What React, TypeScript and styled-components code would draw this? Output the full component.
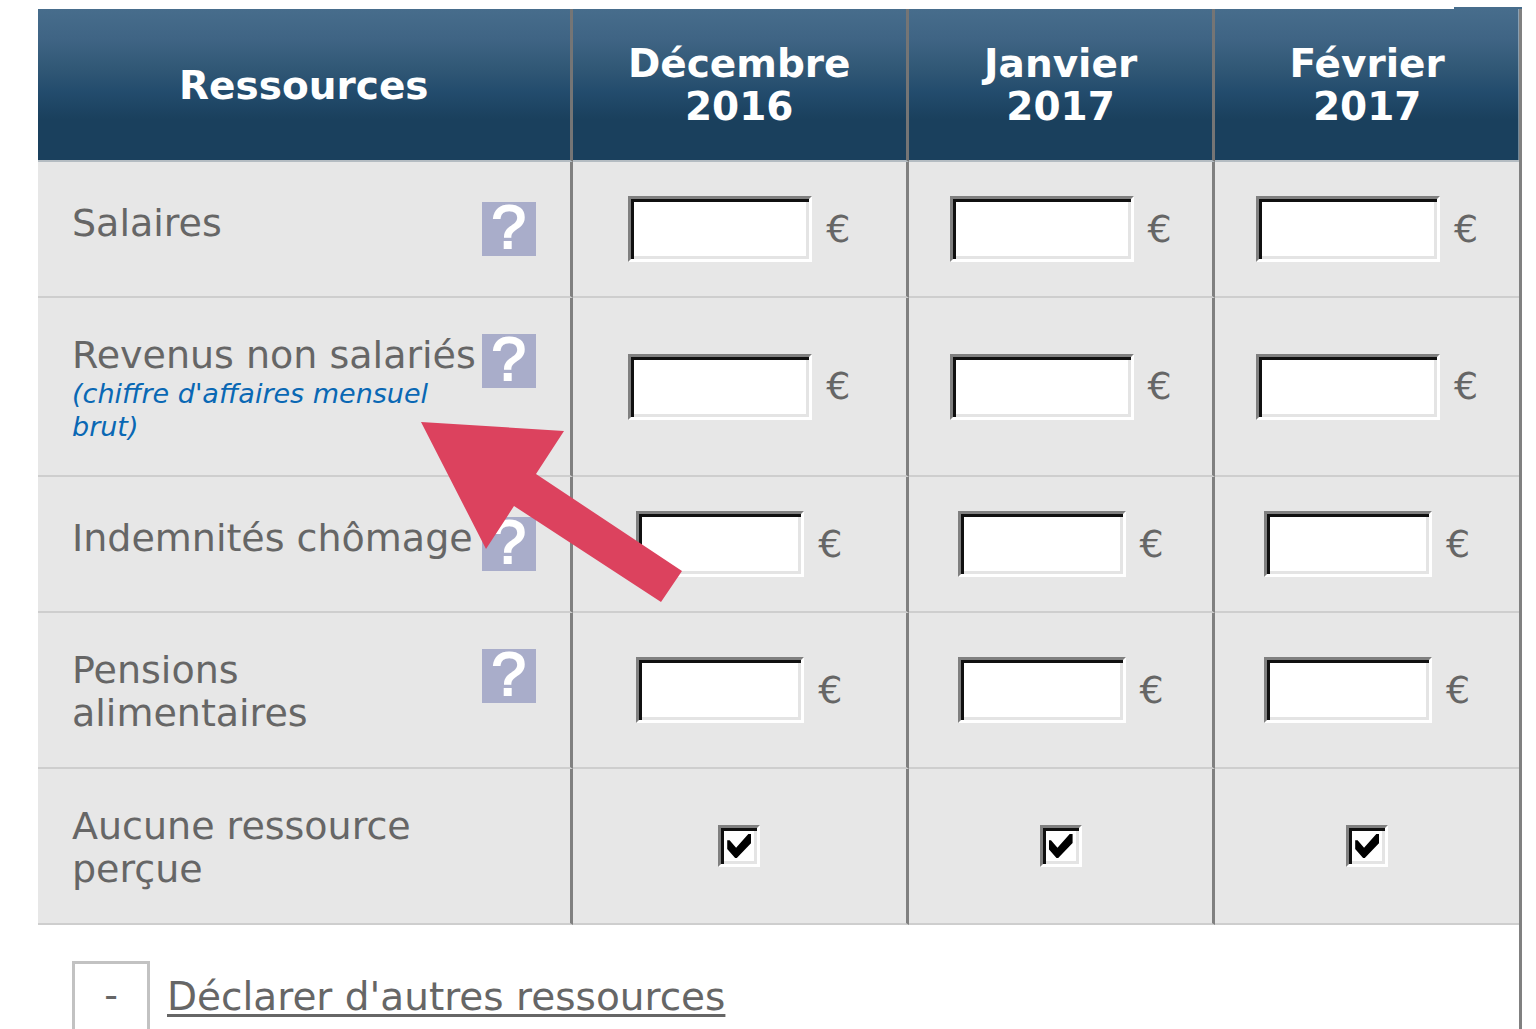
import React, { useState } from "react";
import styled, { createGlobalStyle } from "styled-components";

const GlobalStyle = createGlobalStyle`
  *, *::before, *::after { box-sizing: border-box; }
  body {
    margin: 0;
    background: #ffffff;
    color: #666666;
    font-family: Verdana, "DejaVu Sans", sans-serif;
    font-size: 38px;
    line-height: 43px;
  }
`;

const Page = styled.main`
  display: flex;
  height: 100vh;
  padding: 9px 14px 0 38px;
  overflow: hidden;
`;

const Panel = styled.section`
  position: relative;
  flex: 1;
  border-right: 3px solid #808080;
`;

const ResourceTable = styled.table`
  width: 100%;
  table-layout: fixed;
  border-collapse: separate;
  border-spacing: 0;
`;

const Column = styled.col<{ $share: number }>`
  width: ${(p) => p.$share}%;
`;

const HeadRow = styled.tr`
  background: linear-gradient(
    #476d8c 0%,
    #3f6484 20%,
    #305775 40%,
    #234c6d 54%,
    #1a405d 72%,
    #1a405d 100%
  );
`;

const HeadCell = styled.th`
  position: relative;
  padding: 33px 40px 32px;
  border-right: 3px solid #757575;
  border-bottom: 2px solid #b4bcc2;
  color: #ffffff;
  font-size: 39px;
  font-weight: bold;
  text-align: center;

  &:last-child {
    border-right: 0;
  }

  &:last-child::before {
    content: "";
    position: absolute;
    top: -2px;
    right: -3px;
    width: 68px;
    height: 2px;
    background: #476d8c;
  }
`;

const BodyRow = styled.tr`
  background: #e7e7e7;
`;

const LabelCell = styled.th`
  padding: 36px 34px 32px;
  border-right: 3px solid #808080;
  border-bottom: 2px solid #cecece;
  font-weight: normal;
  text-align: left;
`;

const LabelLine = styled.div`
  display: flex;
  align-items: flex-start;
  min-height: 58px;
`;

const LabelText = styled.div`
  flex: 1;
`;

const Note = styled.em`
  display: block;
  color: #0a68b4;
  font-size: 27px;
  line-height: 33px;
`;

const HelpButton = styled.button`
  flex: none;
  width: 54px;
  height: 54px;
  padding: 0 0 4px;
  border: 0;
  background: #a9adca;
  color: #ffffff;
  font-family: "Liberation Sans", Arial, sans-serif;
  font-size: 62px;
  line-height: 50px;
  text-align: center;
  -webkit-text-stroke: 2px #ffffff;
`;

const ValueCell = styled.td`
  padding: 34px 0;
  border-right: 3px solid #808080;
  border-bottom: 2px solid #cecece;

  &:last-child {
    border-right: 0;
  }
`;

const Field = styled.label`
  display: flex;
  align-items: center;
  justify-content: center;
  gap: 14px;
`;

const AmountInput = styled.input<{ $narrow?: boolean }>`
  width: ${(p) => (p.$narrow ? 168 : 184)}px;
  height: 66px;
  padding: 3px 8px;
  border: 3px solid;
  border-color: #808080 #ffffff #ffffff #808080;
  border-radius: 0;
  outline: 0;
  background: #ffffff;
  box-shadow: inset 3px 3px 0 #101010, inset -3px -3px 0 #e4e4e4;
  color: #333333;
  font: inherit;
`;

const TickBox = styled.input`
  display: grid;
  place-items: center;
  appearance: none;
  width: 42px;
  height: 42px;
  margin: 0;
  border: 3px solid;
  border-color: #808080 #ffffff #ffffff #808080;
  background: #ffffff;
  box-shadow: inset 3px 3px 0 #101010, inset -3px -3px 0 #e4e4e4;

  &:checked::before {
    content: "";
    width: 24px;
    height: 24px;
    background: #000000;
    clip-path: polygon(
      0 26%,
      10% 26%,
      37% 57%,
      88% 0,
      100% 0,
      100% 38%,
      40% 100%,
      33% 100%,
      0 63%
    );
  }
`;

const Footer = styled.div`
  display: flex;
  align-items: center;
  gap: 17px;
  padding: 36px 34px 0;
`;

const ToggleButton = styled.button`
  width: 78px;
  height: 78px;
  padding: 0 0 10px;
  border: 3px solid #c2c2c2;
  background: #ffffff;
  color: #666666;
  font: inherit;
`;

const MoreLink = styled.a`
  padding-bottom: 8px;
  color: #666666;
  font-size: 39px;
  text-decoration: underline;
  text-decoration-thickness: 3px;
  text-decoration-skip-ink: none;
  text-underline-offset: 4px;
`;

const Pointer = styled.svg`
  position: absolute;
  top: 413px;
  left: 383px;
  width: 262px;
  height: 181px;
  pointer-events: none;
`;

const months = ["Décembre 2016", "Janvier 2017", "Février 2017"];

type Resource = { label: string; note?: string; narrow?: boolean };

const resources: Resource[] = [
  { label: "Salaires" },
  { label: "Revenus non salariés", note: "(chiffre d'affaires mensuel brut)" },
  { label: "Indemnités chômage", narrow: true },
  { label: "Pensions alimentaires", narrow: true },
];

function ResourceRow({ label, note, narrow }: Resource) {
  return (
    <BodyRow>
      <LabelCell scope="row">
        <LabelLine>
          <LabelText>
            {label}
            {note && <Note>{note}</Note>}
          </LabelText>
          <HelpButton type="button">?</HelpButton>
        </LabelLine>
      </LabelCell>
      {months.map((month) => (
        <ValueCell key={month}>
          <Field>
            <AmountInput type="text" $narrow={narrow} aria-label={`${label}, ${month}`} />
            €
          </Field>
        </ValueCell>
      ))}
    </BodyRow>
  );
}

export default function App() {
  const [none, setNone] = useState([true, true, true]);
  const toggle = (index: number) =>
    setNone((values) => values.map((value, i) => (i === index ? !value : value)));

  return (
    <>
      <GlobalStyle />
      <Page>
        <Panel>
          <ResourceTable>
            <colgroup>
              <Column $share={36.1} />
              <Column $share={22.7} />
              <Column $share={20.7} />
              <Column $share={20.5} />
            </colgroup>
            <thead>
              <HeadRow>
                <HeadCell scope="col">Ressources</HeadCell>
                {months.map((month) => (
                  <HeadCell key={month} scope="col">
                    {month}
                  </HeadCell>
                ))}
              </HeadRow>
            </thead>
            <tbody>
              {resources.map((resource) => (
                <ResourceRow key={resource.label} {...resource} />
              ))}
              <BodyRow>
                <LabelCell scope="row">Aucune ressource perçue</LabelCell>
                {months.map((month, index) => (
                  <ValueCell key={month}>
                    <Field>
                      <TickBox
                        type="checkbox"
                        checked={none[index]}
                        onChange={() => toggle(index)}
                        aria-label={`Aucune ressource perçue, ${month}`}
                      />
                    </Field>
                  </ValueCell>
                ))}
              </BodyRow>
            </tbody>
          </ResourceTable>
          <Footer>
            <ToggleButton type="button">-</ToggleButton>
            <MoreLink href="#autres">Déclarer d'autres ressources</MoreLink>
          </Footer>
          <Pointer viewBox="0 0 262 181" aria-hidden="true">
            <polygon points="0,0 143,9 115,52 261,149 240,180 93,84 65,127" fill="#dc425e" />
          </Pointer>
        </Panel>
      </Page>
    </>
  );
}
